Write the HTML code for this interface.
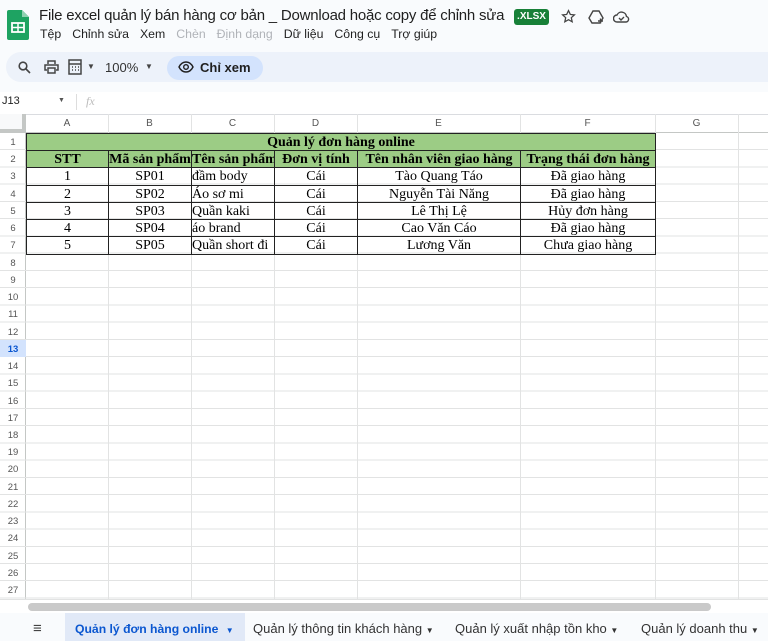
<!DOCTYPE html>
<html><head><meta charset="utf-8"><style>
*{box-sizing:border-box;margin:0;padding:0}
body{width:768px;height:641px;overflow:hidden;background:#f9fbfd;font-family:"Liberation Sans",Arial,sans-serif;position:relative;color:#1f1f1f}
.abs{position:absolute}
.title{left:39px;top:7px;font-size:15px;color:#1f1f1f;white-space:nowrap;letter-spacing:-0.22px}
.menu{left:40px;top:27px;font-size:12.3px;white-space:nowrap}
.menu span{margin-right:11px}
.menu .dis{color:#b0b3b8}
.toolbar{left:6px;top:52px;width:762px;height:30px;background:#edf2fa;border-radius:15px 0 0 15px}
.grid{left:0;top:92px;width:768px;height:520px;background:#fff}
.dt{position:absolute;left:26px;top:133px;display:grid;grid-template-columns:82px 83px 83px 83px 163px 135px;grid-template-rows:repeat(7,17.24px)}
.dt div{border-right:1px solid #222;border-bottom:1px solid #222;font-family:"Liberation Serif",serif;font-size:14px;line-height:16px;padding-top:1px;text-align:center;white-space:nowrap;overflow:hidden;color:#000}
.g{background:#9ccc85;font-weight:bold}
.l{text-align:left!important}
.vl{position:absolute;top:114px;width:1px;height:485px;background:#e2e3e3}
</style></head><body>
<svg class="abs" style="left:7px;top:10px" width="22" height="30" viewBox="0 0 22 30"><path d="M2 0h13l7 7v21a2 2 0 0 1-2 2H2a2 2 0 0 1-2-2V2a2 2 0 0 1 2-2z" fill="#1ea362"/><path d="M15 0v7h7z" fill="#8ed1b1"/><rect x="5" y="13" width="12" height="9" fill="none" stroke="#fff" stroke-width="1.8"/><path d="M5 17.5h12M11 13v9" stroke="#fff" stroke-width="1.5"/></svg>
<div class="abs title">File excel quản lý bán hàng cơ bản _ Download hoặc copy để chỉnh sửa</div>
<div class="abs" style="left:514px;top:9px;width:35px;height:16px;background:#188038;border-radius:3px;color:#fff;font-size:10px;font-weight:bold;line-height:16px;text-align:center">.XLSX</div>
<svg class="abs" style="left:561px;top:9px" width="15" height="15" viewBox="0 0 24 24" fill="none" stroke="#444" stroke-width="2"><path d="M12 2.5l2.9 6.2 6.6.7-5 4.5 1.4 6.6L12 17.2l-5.9 3.3 1.4-6.6-5-4.5 6.6-.7z"/></svg>
<svg class="abs" style="left:588px;top:9px" width="16" height="16" viewBox="0 0 16 16" fill="none" stroke="#444" stroke-width="1.4"><path d="M5 2h6l4 7-3 5H4L1 9z"/><path d="M10 12h5M12.5 9.5v5"/></svg>
<svg class="abs" style="left:613px;top:10px" width="17" height="13" viewBox="0 0 17 13" fill="none" stroke="#444" stroke-width="1.4"><path d="M4 12a3.5 3.5 0 0 1 0-7 5 5 0 0 1 9.5 1.5A2.8 2.8 0 0 1 13 12z"/><path d="M6 8l2 2 3-3"/></svg>
<div class="abs menu"><span>Tệp</span><span>Chỉnh sửa</span><span>Xem</span><span class="dis">Chèn</span><span class="dis">Định dạng</span><span>Dữ liệu</span><span>Công cụ</span><span>Trợ giúp</span></div>
<div class="abs toolbar"></div>
<svg class="abs" style="left:18px;top:61px" width="13" height="13" viewBox="0 0 13 13" fill="none" stroke="#444" stroke-width="1.6"><circle cx="5" cy="5" r="3.8"/><path d="M8 8l4 4"/></svg>
<svg class="abs" style="left:44px;top:60px" width="15" height="14" viewBox="0 0 15 14" fill="none" stroke="#444" stroke-width="1.5"><path d="M4 4V1h7v3M3 10H1V5h13v5h-2M4 8h7v5H4z"/></svg>
<svg class="abs" style="left:68px;top:59px" width="14" height="16" viewBox="0 0 14 16" fill="none" stroke="#444" stroke-width="1.5"><rect x="1" y="1" width="12" height="14"/><path d="M1 5h12M4 8h1M7 8h1M10 8h1M4 11h1M7 11h1M10 11h1"/></svg>
<div class="abs" style="left:87px;top:62px;font-size:8px;color:#444">▼</div>
<div class="abs" style="left:105px;top:60px;font-size:13px;color:#333">100%</div>
<div class="abs" style="left:145px;top:62px;font-size:8px;color:#444">▼</div>
<div class="abs" style="left:167px;top:56px;width:96px;height:24px;background:#d3e3fd;border-radius:12px"></div>
<svg class="abs" style="left:178px;top:61px" width="16" height="12" viewBox="0 0 16 12" fill="none" stroke="#1f1f1f" stroke-width="1.4"><path d="M1 6c2-4 5-5 7-5s5 1 7 5c-2 4-5 5-7 5s-5-1-7-5z"/><circle cx="8" cy="6" r="2.3"/></svg>
<div class="abs" style="left:200px;top:60px;font-size:13px;font-weight:bold;color:#1f1f1f">Chỉ xem</div>
<div class="abs grid"></div>
<div class="abs" style="left:2px;top:95px;font-size:11px">J13</div>
<div class="abs" style="left:58px;top:97px;font-size:7px;color:#555">▼</div>
<div class="abs" style="left:76px;top:94px;width:1px;height:16px;background:#ddd"></div>
<div class="abs" style="left:86px;top:94px;font-size:12px;color:#bbb;font-style:italic;font-family:'Liberation Serif',serif">fx</div>
<div class="abs" style="left:0;top:114px;width:768px;height:19px;background:#fff;border-top:1px solid #dadce0;border-bottom:1px solid #c4c7c5"></div>
<div class="abs" style="left:0;top:114px;width:26px;height:19px;background:#f8f9fa;border-right:4px solid #c4c7c5;border-bottom:4px solid #c4c7c5"></div>
<div class="abs" style="left:0;top:133px;width:26px;height:466px;background:#fff;border-right:1px solid #c4c7c5"></div>
<div class="abs" style="left:0;top:133px;width:768px;height:466px;background:repeating-linear-gradient(to bottom,transparent 0,transparent 16.24px,#e2e3e3 16.24px,#e2e3e3 17.24px)"></div>
<div class="abs" style="left:0;top:340px;width:26px;height:17px;background:#d3e3fd"></div>
<div class="vl" style="left:108px"></div><div class="vl" style="left:191px"></div><div class="vl" style="left:274px"></div><div class="vl" style="left:357px"></div><div class="vl" style="left:520px"></div><div class="vl" style="left:655px"></div><div class="vl" style="left:738px"></div>
<div class="abs" style="left:26px;top:114px;width:742px;font-size:10px;color:#555;line-height:19px;display:grid;grid-template-columns:82px 83px 83px 83px 163px 135px 83px 30px;text-align:center">
<span>A</span><span>B</span><span>C</span><span>D</span><span>E</span><span>F</span><span>G</span><span></span></div>
<div class="abs" style="left:0;top:134px;width:26px;display:grid;grid-template-rows:repeat(27,17.24px);font-size:9.5px;color:#555;line-height:17px;text-align:center">
<span>1</span><span>2</span><span>3</span><span>4</span><span>5</span><span>6</span><span>7</span><span>8</span><span>9</span><span>10</span><span>11</span><span>12</span><span style="color:#0b57d0;font-weight:bold">13</span><span>14</span><span>15</span><span>16</span><span>17</span><span>18</span><span>19</span><span>20</span><span>21</span><span>22</span><span>23</span><span>24</span><span>25</span><span>26</span><span>27</span></div>
<div class="dt" style="border-left:1px solid #222;border-top:1px solid #222">
<div class="g" style="grid-column:1/7">Quản lý đơn hàng online</div>
<div class="g">STT</div><div class="g">Mã sản phẩm</div><div class="g">Tên sản phẩm</div><div class="g">Đơn vị tính</div><div class="g">Tên nhân viên giao hàng</div><div class="g">Trạng thái đơn hàng</div>
<div>1</div><div>SP01</div><div class="l">đầm body</div><div>Cái</div><div>Tào Quang Táo</div><div>Đã giao hàng</div>
<div>2</div><div>SP02</div><div class="l">Áo sơ mi</div><div>Cái</div><div>Nguyễn Tài Năng</div><div>Đã giao hàng</div>
<div>3</div><div>SP03</div><div class="l">Quần kaki</div><div>Cái</div><div>Lê Thị Lệ</div><div>Hủy đơn hàng</div>
<div>4</div><div>SP04</div><div class="l">áo brand</div><div>Cái</div><div>Cao Văn Cáo</div><div>Đã giao hàng</div>
<div>5</div><div>SP05</div><div class="l">Quần short đi</div><div>Cái</div><div>Lương Văn</div><div>Chưa giao hàng</div>
</div>
<div class="abs" style="left:0;top:599px;width:768px;height:14px;background:#fff;border-top:1px solid #e2e3e3"></div>
<div class="abs" style="left:28px;top:603px;width:683px;height:8px;background:#c9c9c9;border-radius:4px"></div>
<div class="abs" style="left:0;top:613px;width:768px;height:28px;background:#f9fbfd"></div>
<div class="abs" style="left:33px;top:620px;font-size:15px;color:#444">≡</div>
<div class="abs" style="left:65px;top:613px;width:180px;height:28px;background:#e1e9f7"></div>
<div class="abs" style="left:75px;top:622px;font-size:12.2px;font-weight:bold;color:#0b57d0;white-space:nowrap">Quản lý đơn hàng online <span style="font-size:8px;margin-left:4px">▼</span></div>
<div class="abs" style="left:253px;top:621px;font-size:13px;color:#333;white-space:nowrap">Quản lý thông tin khách hàng <span style="font-size:8px">▼</span></div>
<div class="abs" style="left:455px;top:621px;font-size:13px;color:#333;white-space:nowrap">Quản lý xuất nhập tồn kho <span style="font-size:8px">▼</span></div>
<div class="abs" style="left:641px;top:621px;font-size:13px;color:#333;white-space:nowrap">Quản lý doanh thu <span style="font-size:8px">▼</span></div>
</body></html>
